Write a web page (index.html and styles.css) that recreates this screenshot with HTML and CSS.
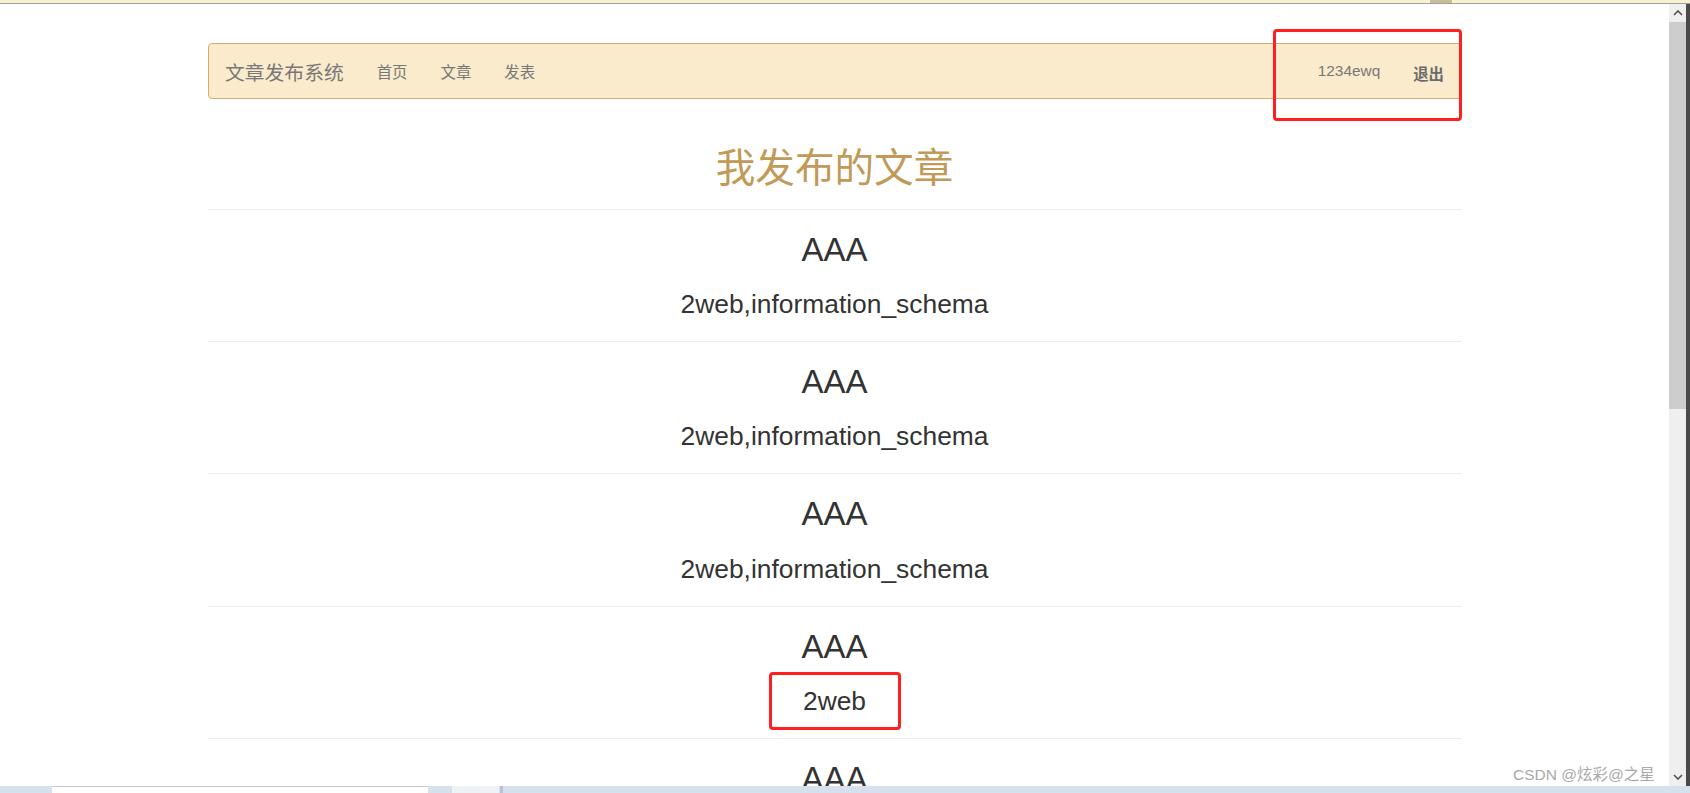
FILE: index.html
```html
<!DOCTYPE html>
<html lang="zh-CN">
<head>
  <meta charset="UTF-8">
  <title>我发布的文章</title>
  <link rel="stylesheet" href="styles.css">
</head>
<body>

<div class="top-strip"><span class="strip-mark"></span></div>

<div class="window">
  <div class="viewport">
    <div class="container">
      <nav class="navbar">
        <a class="brand" href="#">文章发布系统</a>
        <ul class="nav">
          <li><a href="#">首页</a></li>
          <li><a href="#">文章</a></li>
          <li><a href="#">发表</a></li>
        </ul>
        <ul class="nav nav-right">
          <li><a href="#">1234ewq</a></li>
          <li><a class="logout" href="#">退出</a></li>
        </ul>
      </nav>

      <h1 class="page-title">我发布的文章</h1>

      <div class="article">
        <h2>AAA</h2>
        <h3>2web,information_schema</h3>
      </div>
      <div class="article">
        <h2>AAA</h2>
        <h3>2web,information_schema</h3>
      </div>
      <div class="article">
        <h2>AAA</h2>
        <h3>2web,information_schema</h3>
      </div>
      <div class="article">
        <h2>AAA</h2>
        <h3>2web</h3>
      </div>
      <div class="article">
        <h2>AAA</h2>
      </div>
    </div>

    <!-- red marks drawn on the screenshot -->
    <div class="mark mark-user"></div>
    <div class="mark mark-db"></div>

    <div class="widget"><span class="widget-bars"></span></div>
  </div>

  <div class="scrollbar">
    <div class="scroll-btn">
      <svg width="10" height="6" viewBox="0 0 10 6"><polyline points="1,5 5,1 9,5" fill="none" stroke="#505050" stroke-width="1.6"/></svg>
    </div>
    <div class="scroll-thumb"></div>
    <div class="scroll-rest"></div>
    <div class="scroll-btn">
      <svg width="10" height="6" viewBox="0 0 10 6"><polyline points="1,1 5,5 9,1" fill="none" stroke="#505050" stroke-width="1.6"/></svg>
    </div>
  </div>
</div>

<div class="taskbar">
  <span class="task-input"></span>
  <span class="task-btn"></span>
  <span class="task-sep"></span>
</div>

<div class="watermark">CSDN @炫彩@之星</div>

</body>
</html>
```

FILE: styles.css
```css
* {
  box-sizing: border-box;
}
html, body {
  margin: 0;
  padding: 0;
  height: 793px;
  overflow: hidden;
  background: #fff;
  font-family: "Liberation Sans", Arial, "Noto Sans CJK SC", sans-serif;
  color: #333;
}
body {
  position: relative;
}
a {
  text-decoration: none;
}

.top-strip {
  height: 4px;
  background: #f6f0d6;
  border-bottom: 1px solid #a8a38a;
  position: relative;
}
.strip-mark {
  position: absolute;
  left: 1430px;
  top: 0;
  width: 22px;
  height: 3px;
  background: #c9bb9c;
}

.window {
  display: flex;
  height: 782px;
}
.viewport {
  position: relative;
  width: 1669px;
  height: 782px;
  overflow: hidden;
}
.container {
  width: 1254px;
  margin: 0 auto;
  padding-top: 39px;
}

.navbar {
  display: flex;
  align-items: center;
  height: 56px;
  background: #faebcc;
  border: 1px solid #d6ab6c;
  border-radius: 4px;
}
.brand {
  padding: 0 16.5px;
  font-size: 19.8px;
  color: #777;
  font-family: "Noto Sans CJK SC", sans-serif;
}
.nav {
  display: flex;
  list-style: none;
  margin: 0;
  padding: 0;
}
.nav a {
  display: block;
  padding: 0 16.5px;
  font-size: 15.4px;
  color: #777;
}
.nav-right {
  margin-left: auto;
  padding-top: 3px;
}
.logout {
  font-weight: bold;
  color: #6b6b6b !important;
}

.page-title {
  margin: 44px 0 0;
  text-align: center;
  font-size: 39.6px;
  line-height: 1.1;
  font-weight: normal;
  color: #c19a57;
  font-family: "Noto Sans CJK SC", sans-serif;
}

.article {
  margin-top: 22px;
  padding-top: 22px;
  border-top: 1px solid #eee;
  text-align: center;
}
.article h2 {
  margin: 0 0 22px;
  font-size: 33px;
  line-height: 1.1;
  font-weight: normal;
}
.article h3 {
  margin: 0;
  font-size: 26.4px;
  line-height: 1.1;
  font-weight: normal;
}

.mark {
  position: absolute;
  border: 3px solid #ff1f1f;
  border-radius: 4px;
}
.mark-user {
  left: 1273px;
  top: 25px;
  width: 189px;
  height: 92px;
}
.mark-db {
  left: 769px;
  top: 668px;
  width: 132px;
  height: 58px;
}

.watermark {
  position: absolute;
  left: 1513px;
  top: 766px;
  font-size: 15.5px;
  line-height: 18px;
  color: #a9a9a9;
  white-space: nowrap;
  text-shadow: 1px 0 0 #fff, -1px 0 0 #fff;
  font-family: "Liberation Sans", "Noto Sans CJK SC", sans-serif;
}
.widget {
  position: absolute;
  left: 1677px;
  top: 593px;
  width: 14px;
  height: 66px;
  background: #3c424e;
  border-radius: 4px 0 0 4px;
}

.scrollbar {
  display: flex;
  flex-direction: column;
  width: 21px;
  height: 782px;
  background: #efefef;
  border-right: 4px solid #4a4a4a;
}
.scroll-btn {
  height: 18px;
  display: flex;
  align-items: center;
  justify-content: center;
}
.scroll-thumb {
  height: 387px;
  background: #cdcdcd;
}
.scroll-rest {
  flex: 1;
}
.widget-bars {
  position: absolute;
  left: 4px;
  top: 44px;
  width: 5px;
  height: 14px;
  background: repeating-linear-gradient(#3fbf8f 0 2px, #2a6a58 2px 3px);
}

.taskbar {
  display: flex;
  height: 7px;
  background: #d6e1ed;
}
.task-input {
  margin-left: 52px;
  width: 376px;
  background: #fff;
  border-top: 1px solid #c8c8c8;
}
.task-btn {
  margin-left: 24px;
  width: 47px;
  background: #edf2f7;
}
.task-sep {
  margin-left: 1px;
  width: 3px;
  background: #b7c3cf;
}
```
